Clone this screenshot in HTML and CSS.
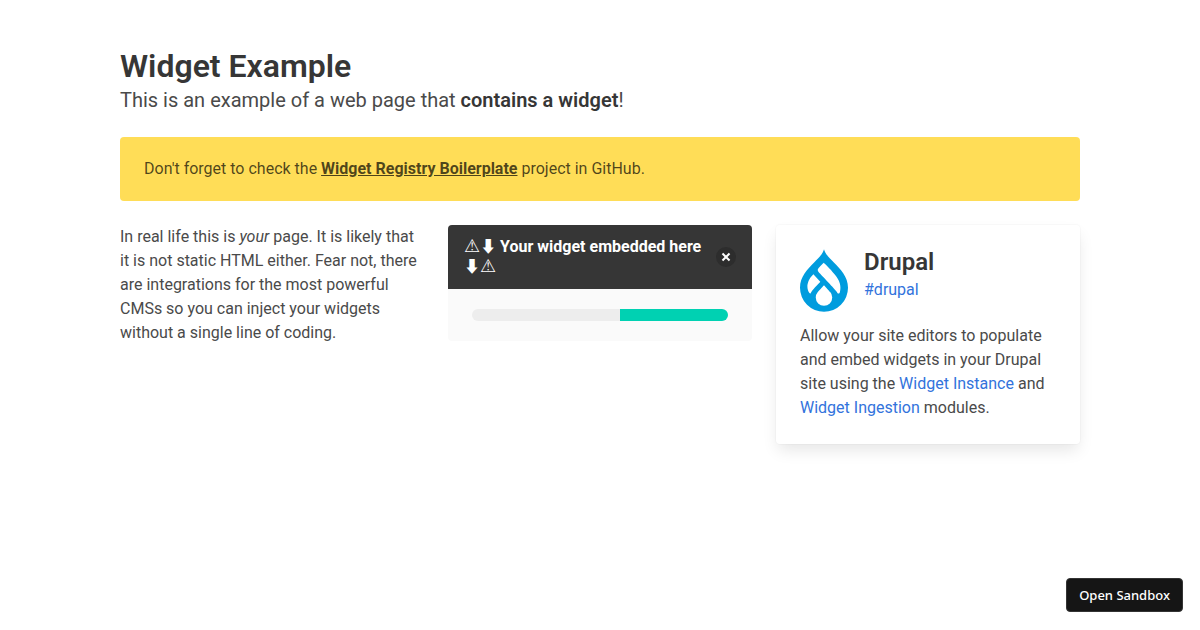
FILE: index.html
```html
<!DOCTYPE html>
<html lang="en">
  <head>
    <meta charset="utf-8" />
    <meta name="viewport" content="width=device-width, initial-scale=1" />
    <title>Widget Example</title>
    <link rel="stylesheet" href="styles.css">
  </head>
  <body>
    <section class="section">
      <div class="container">
        <h1 class="title">Widget Example</h1>
        <p class="subtitle">
          This is an example of a web page that <strong>contains a widget</strong>!
        </p>
        <div class="notification">
          Don't forget to check the <a href="#boilerplate">Widget Registry Boilerplate</a> project in GitHub.
        </div>
        <div class="columns">
          <div class="column">
            <p>
              In real life this is <em>your</em> page. It is likely that it is
              not static HTML either. Fear not, there are integrations for the
              most powerful CMSs so you can inject your widgets without a
              single line of coding.
            </p>
          </div>
          <div class="column">
            <article class="message">
              <div class="message-header">
                <p><span class="warning">&#x26A0;</span>&#x2B07; Your widget embedded here &#x2B07;<span class="warning">&#x26A0;</span></p>
                <button class="delete" type="button" aria-label="delete"></button>
              </div>
              <div class="message-body">
                <div class="progress" role="progressbar" aria-label="Loading"></div>
              </div>
            </article>
          </div>
          <div class="column">
            <div class="card">
              <div class="media">
                <svg class="logo" viewBox="0 0 186.52 243.7" aria-hidden="true">
                  <path fill="#009cde" d="M131.64,51.91C114.49,34.76,98.13,18.42,93.26,0c-4.87,18.42-21.24,34.76-38.39,51.91C29.16,77.61,0,106.75,0,150.44a93.26,93.26,0,1,0,186.52,0c0-43.69-29.16-72.83-54.88-98.53m-92,120.49c-5.72-.19-26.82-36.56,12.32-75.3l25.9,28.29a2.21,2.21,0,0,1-.18,3.26c-6.18,6.34-32.52,32.77-35.79,41.9-.68,1.89-1.66,1.82-2.25,1.85m53.62,47.94a32.08,32.08,0,0,1-32.07-32.08,33.17,33.17,0,0,1,8-21.3c5.82-7.13,24.09-27,24.09-27s18,20.16,24.05,26.93a31.28,31.28,0,0,1,8,21.37,32.08,32.08,0,0,1-32.08,32.08m61.39-52c-.7,1.52-2.27,4.05-4.41,4.13-3.81.14-4.22-1.82-7-6-6.18-9.15-60.11-65.51-70.2-76.41C64.13,80.42,71.8,73.8,75.28,70.34c4.36-4.37,17.08-17.08,17.08-17.08s37.93,36,53.73,60.57,10.35,45.88,8.55,54.49" />
                </svg>
                <div>
                  <h2 class="card-title">Drupal</h2>
                  <p><a href="#drupal">#drupal</a></p>
                </div>
              </div>
              <p>
                Allow your site editors to populate and embed widgets in your
                Drupal site using the <a href="#instance">Widget Instance</a>
                and <a href="#ingestion">Widget Ingestion</a> modules.
              </p>
            </div>
          </div>
        </div>
      </div>
    </section>
    <button class="sandbox" type="button">Open Sandbox</button>
  </body>
</html>
```
FILE: styles.css
```css
* {
  box-sizing: border-box;
}
body {
  margin: 0;
  color: #4a4a4a;
  font: 16px/24px Roboto, sans-serif;
}
h1,
h2,
p {
  margin: 0;
}
a {
  color: #3273dc;
  text-decoration: none;
}
strong {
  color: #363636;
  font-weight: 600;
}
.section {
  padding: 48px 24px;
}
.container {
  max-width: 960px;
  margin: 0 auto;
}
.title {
  color: #363636;
  font-size: 32px;
  font-weight: 600;
  line-height: 36px;
}
.subtitle {
  margin: 4px 0 24px;
  font-size: 20px;
  line-height: 25px;
}
.notification {
  margin-bottom: 24px;
  padding: 20px 24px;
  border-radius: 4px;
  background: #ffdd57;
  color: rgba(0, 0, 0, 0.7);
}
.notification a {
  color: inherit;
  font-weight: 700;
  text-decoration: underline;
}
.columns {
  display: grid;
  grid-template-columns: repeat(3, 1fr);
  gap: 24px;
}
.message {
  border-radius: 4px;
  background: #fafafa;
}
.message-header {
  display: flex;
  align-items: center;
  justify-content: space-between;
  gap: 12px;
  padding: 12px 16px;
  border-radius: 4px 4px 0 0;
  background: #363636;
  color: #fff;
  font-family: Roboto, "Noto Sans CJK JP", sans-serif;
  font-weight: 700;
  line-height: 20px;
}
.warning {
  font-family: "DejaVu Sans", sans-serif;
  font-size: 18px;
  line-height: 1;
}
.delete {
  position: relative;
  flex: none;
  width: 20px;
  height: 20px;
  padding: 0;
  border: 0;
  border-radius: 50%;
  background: rgba(10, 10, 10, 0.2);
}
.delete::before,
.delete::after {
  position: absolute;
  top: 9px;
  left: 5px;
  width: 10px;
  height: 2px;
  background: #fff;
  content: "";
  transform: rotate(45deg);
}
.delete::after {
  transform: rotate(-45deg);
}
.message-body {
  padding: 20px 24px;
}
.progress {
  height: 12px;
  border-radius: 6px;
  background: linear-gradient(to right, #ededed 58%, #00d1b2 58%);
}
.card {
  padding: 24px;
  border-radius: 4px;
  box-shadow: 0 8px 16px -2px rgba(10, 10, 10, 0.1), 0 0 0 1px rgba(10, 10, 10, 0.02);
}
.media {
  display: flex;
  gap: 16px;
  margin-bottom: 12px;
}
.logo {
  width: 48px;
  height: 63px;
}
.card-title {
  margin-bottom: 3px;
  color: #363636;
  font-size: 24px;
  font-weight: 600;
  line-height: 26px;
}
.sandbox {
  position: fixed;
  right: 17px;
  bottom: 18px;
  height: 34px;
  padding: 0 12px;
  border: 1px solid #343434;
  border-radius: 4px;
  background: #151515;
  color: #fff;
  font: 500 13px/17px "Noto Sans", sans-serif;
}
```
